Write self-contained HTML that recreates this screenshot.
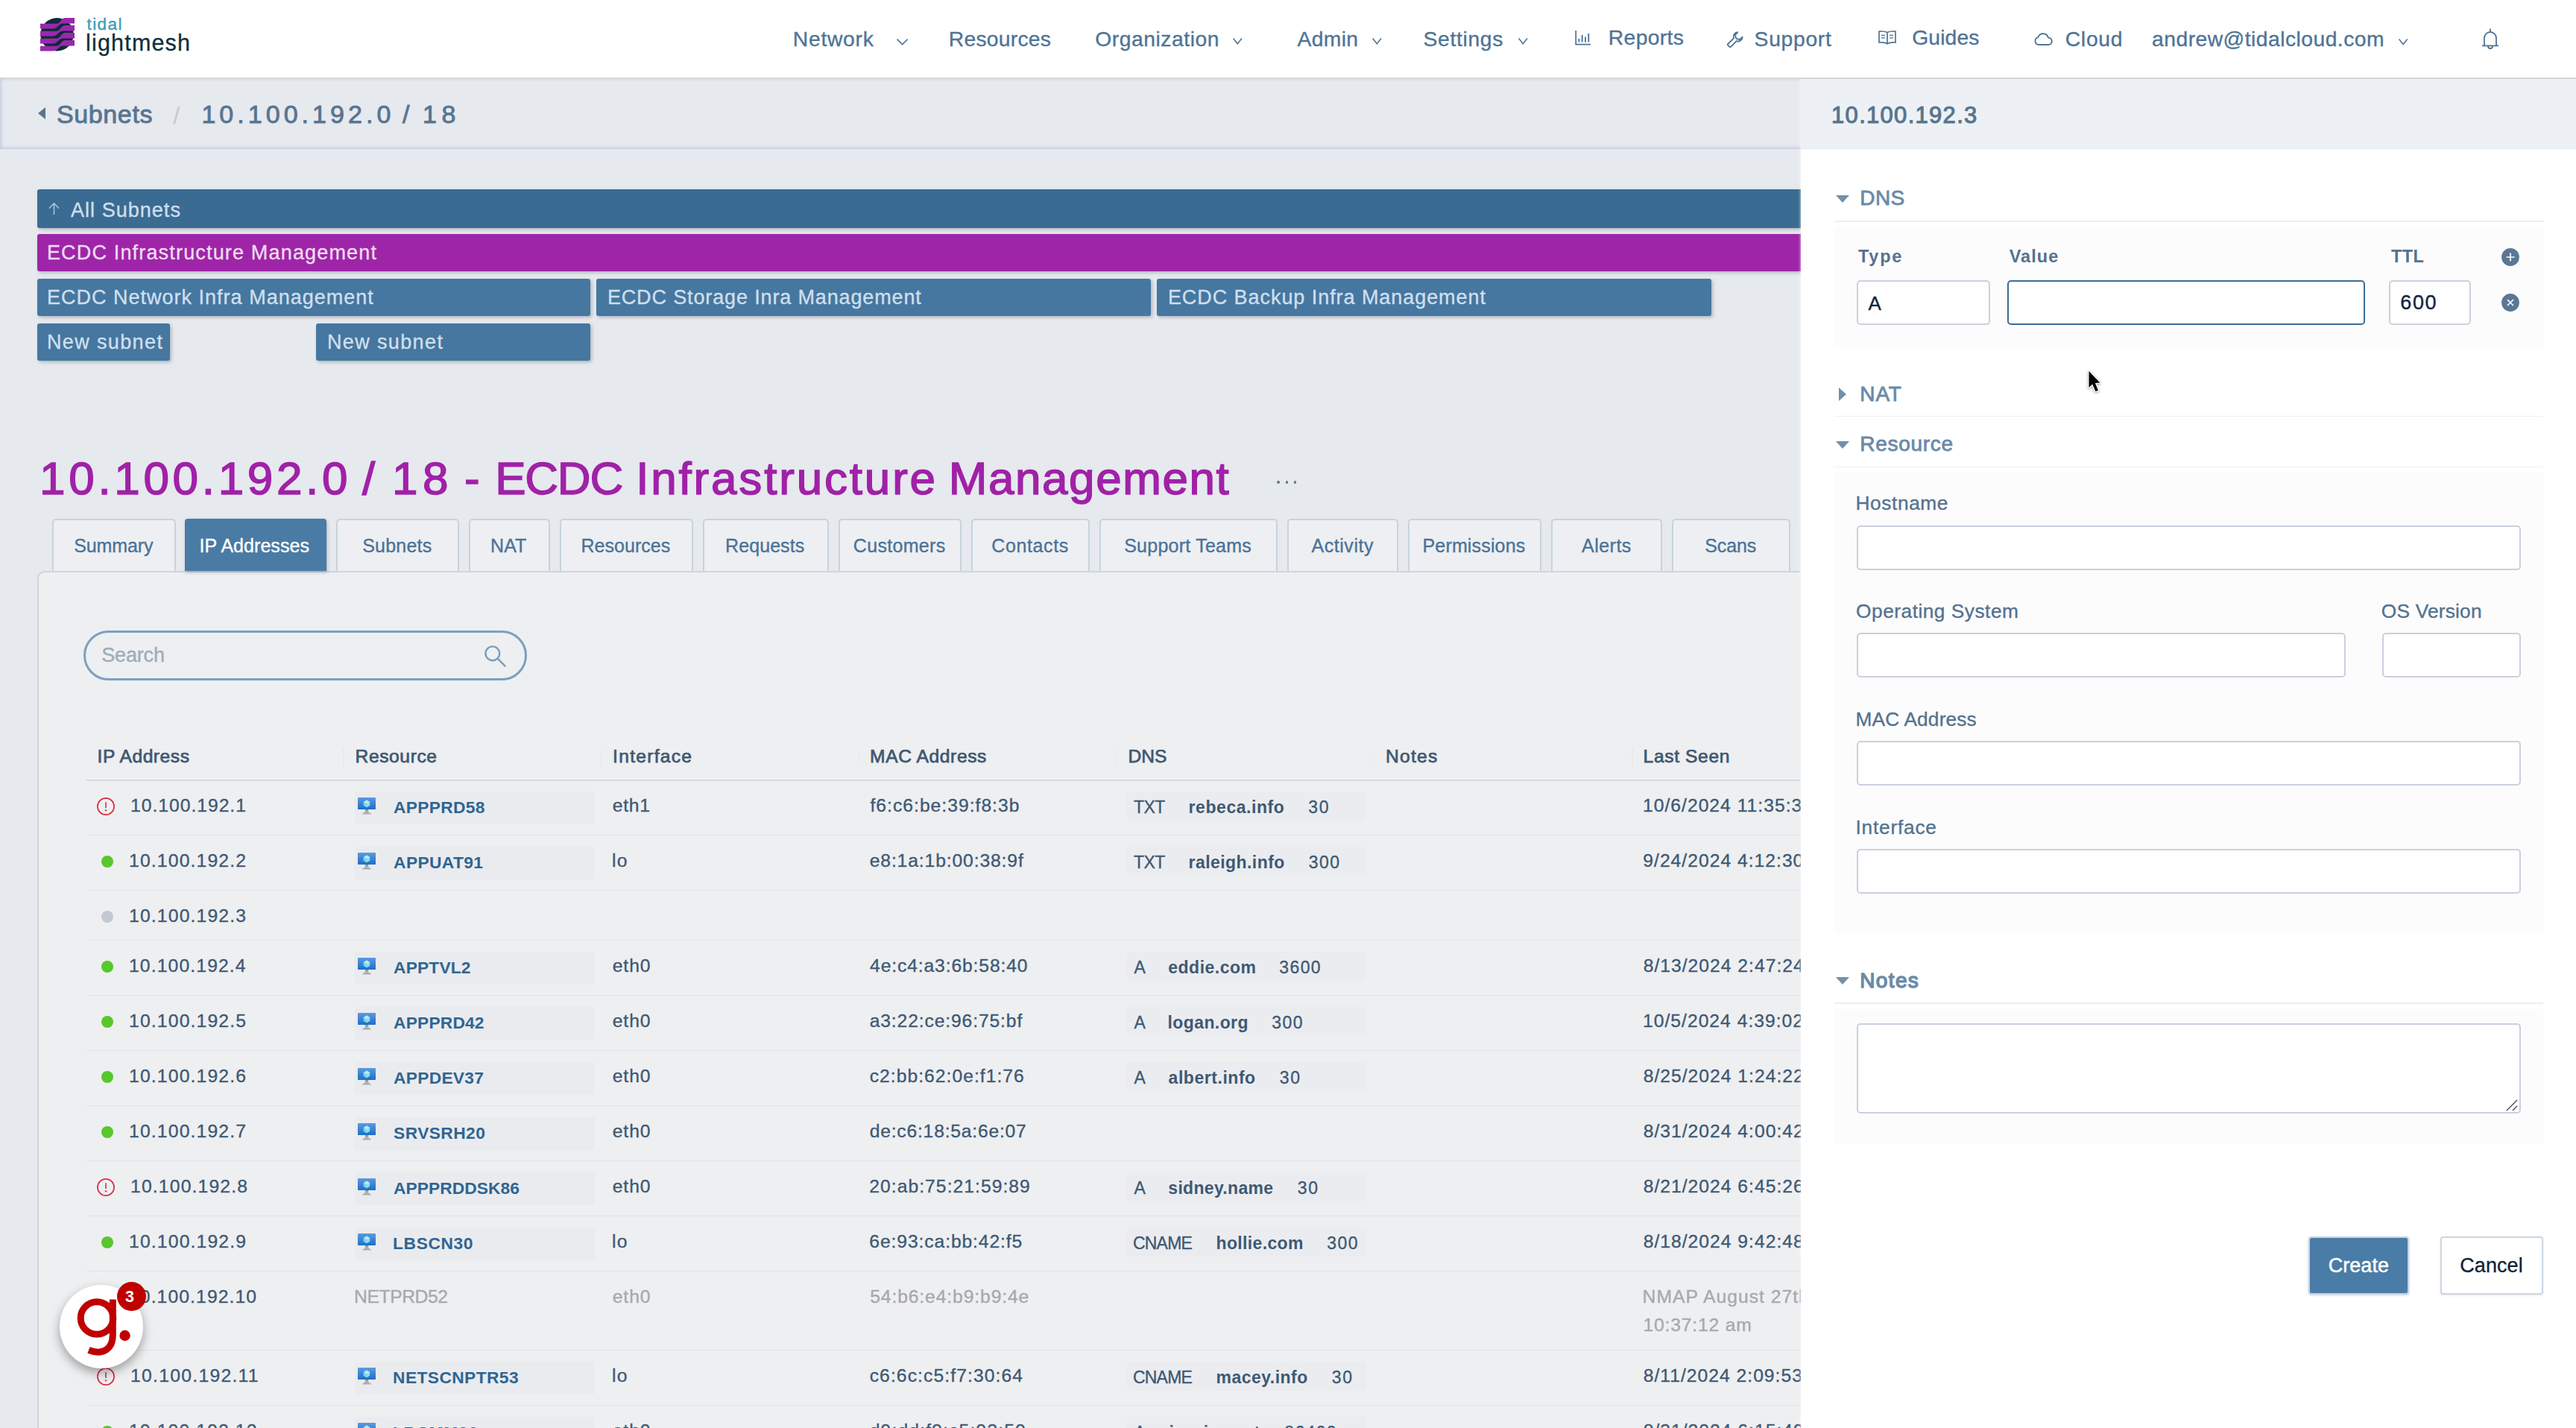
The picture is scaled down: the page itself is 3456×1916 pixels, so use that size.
<!DOCTYPE html>
<html><head><meta charset="utf-8"><title>Lightmesh</title>
<style>
html,body{margin:0;padding:0;}
body{width:3456px;height:1916px;overflow:hidden;position:relative;background:#e6e9ee;font-family:"Liberation Sans",sans-serif;}
.t{position:absolute;white-space:nowrap;line-height:1;}
svg{position:absolute;overflow:visible;}

</style></head><body>
<svg width="0" height="0" style="left:0;top:0"><defs><linearGradient id="vg" x1="0" y1="0" x2="0" y2="1"><stop offset="0" stop-color="#5b9be0"/><stop offset="1" stop-color="#1c6fc8"/></linearGradient>
<linearGradient id="sg" x1="0" y1="0" x2="0" y2="1"><stop offset="0" stop-color="#8c8f94"/><stop offset="1" stop-color="#b9bbc0"/></linearGradient></defs></svg>
<div style="position:absolute;left:50px;top:254px;width:2420px;height:52px;background:#3a6c93;box-shadow:2px 2px 4px rgba(40,50,70,.28);border-radius:3px;"></div>
<div style="position:absolute;left:50px;top:314px;width:2420px;height:50px;background:#9e25a7;box-shadow:2px 2px 4px rgba(40,50,70,.28);border-radius:3px;"></div>
<div style="position:absolute;left:50px;top:374px;width:742px;height:50px;background:#4577a0;box-shadow:2px 2px 4px rgba(40,50,70,.28);border-radius:3px;"></div>
<div style="position:absolute;left:800px;top:374px;width:744px;height:50px;background:#4577a0;box-shadow:2px 2px 4px rgba(40,50,70,.28);border-radius:3px;"></div>
<div style="position:absolute;left:1552px;top:374px;width:744px;height:50px;background:#4577a0;box-shadow:2px 2px 4px rgba(40,50,70,.28);border-radius:3px;"></div>
<div style="position:absolute;left:50px;top:434px;width:178px;height:50px;background:#4577a0;box-shadow:2px 2px 4px rgba(40,50,70,.28);border-radius:3px;"></div>
<div style="position:absolute;left:424px;top:434px;width:368px;height:50px;background:#4577a0;box-shadow:2px 2px 4px rgba(40,50,70,.28);border-radius:3px;"></div>
<svg style="left:65px;top:272px" width="15" height="16" viewBox="0 0 15 16" fill="none" stroke="#a9c2d8" stroke-width="1.6"><path d="M7.5 16 V1 M1 7.5 L7.5 1 L14 7.5"/></svg>
<div style="position:absolute;left:1713.3px;top:645.2px;width:3.6px;height:3.6px;background:#587590;border-radius:2px;"></div>
<div style="position:absolute;left:1724.6px;top:645.2px;width:3.6px;height:3.6px;background:#587590;border-radius:2px;"></div>
<div style="position:absolute;left:1735.8999999999999px;top:645.2px;width:3.6px;height:3.6px;background:#587590;border-radius:2px;"></div>
<div style="position:absolute;left:70px;top:696px;width:161.7px;height:72px;background:#eeeff2;border:2px solid #c6d4de;border-radius:5px 5px 0 0;"></div>
<div style="position:absolute;left:450.5px;top:696px;width:161.7px;height:72px;background:#eeeff2;border:2px solid #c6d4de;border-radius:5px 5px 0 0;"></div>
<div style="position:absolute;left:628.5px;top:696px;width:105.7px;height:72px;background:#eeeff2;border:2px solid #c6d4de;border-radius:5px 5px 0 0;"></div>
<div style="position:absolute;left:750.5px;top:696px;width:175.7px;height:72px;background:#eeeff2;border:2px solid #c6d4de;border-radius:5px 5px 0 0;"></div>
<div style="position:absolute;left:942.5px;top:696px;width:165.7px;height:72px;background:#eeeff2;border:2px solid #c6d4de;border-radius:5px 5px 0 0;"></div>
<div style="position:absolute;left:1124.5px;top:696px;width:161.2px;height:72px;background:#eeeff2;border:2px solid #c6d4de;border-radius:5px 5px 0 0;"></div>
<div style="position:absolute;left:1302.5px;top:696px;width:155.7px;height:72px;background:#eeeff2;border:2px solid #c6d4de;border-radius:5px 5px 0 0;"></div>
<div style="position:absolute;left:1474.5px;top:696px;width:235.7px;height:72px;background:#eeeff2;border:2px solid #c6d4de;border-radius:5px 5px 0 0;"></div>
<div style="position:absolute;left:1726.5px;top:696px;width:145.7px;height:72px;background:#eeeff2;border:2px solid #c6d4de;border-radius:5px 5px 0 0;"></div>
<div style="position:absolute;left:1888.5px;top:696px;width:175.7px;height:72px;background:#eeeff2;border:2px solid #c6d4de;border-radius:5px 5px 0 0;"></div>
<div style="position:absolute;left:2080.5px;top:696px;width:145.7px;height:72px;background:#eeeff2;border:2px solid #c6d4de;border-radius:5px 5px 0 0;"></div>
<div style="position:absolute;left:2242.5px;top:696px;width:155.7px;height:72px;background:#eeeff2;border:2px solid #c6d4de;border-radius:5px 5px 0 0;"></div>
<div style="position:absolute;left:50px;top:765.5px;width:2500px;height:1300px;background:#eeeff1;border:2px solid #cbd6df;border-radius:10px 0 0 0;"></div>
<div style="position:absolute;left:112.3px;top:845.8px;width:588.4px;height:61.2px;border:3.5px solid #7c9fbf;border-radius:36px;"></div>
<svg style="left:650px;top:866px" width="29" height="29" viewBox="0 0 29 29" fill="none" stroke="#7a9ebd" stroke-width="2.4"><circle cx="10.8" cy="10.8" r="9.4"/><path d="M17.6 17.6 L27.6 27.6" stroke-linecap="round"/></svg>
<div style="position:absolute;left:460.0px;top:1005px;width:1.5px;height:23px;background:#e7e9ed;"></div>
<div style="position:absolute;left:805.5px;top:1005px;width:1.5px;height:23px;background:#e7e9ed;"></div>
<div style="position:absolute;left:1151.5px;top:1005px;width:1.5px;height:23px;background:#e7e9ed;"></div>
<div style="position:absolute;left:1496.5px;top:1005px;width:1.5px;height:23px;background:#e7e9ed;"></div>
<div style="position:absolute;left:1842.5px;top:1005px;width:1.5px;height:23px;background:#e7e9ed;"></div>
<div style="position:absolute;left:2189.0px;top:1005px;width:1.5px;height:23px;background:#e7e9ed;"></div>
<div style="position:absolute;left:116px;top:1046px;width:2400px;height:1.5px;background:#d2dbe2;"></div>
<svg style="left:130px;top:1069.5px" width="24" height="24" viewBox="0 0 24 24"><circle cx="12" cy="12" r="11.1" fill="none" stroke="#dc2c43" stroke-width="1.7"/><path d="M12 6.3 V14" stroke="#c4566b" stroke-width="1.9"/><circle cx="12" cy="17.2" r="1.3" fill="#c4566b"/></svg>
<div style="position:absolute;left:476px;top:1062px;width:321.5px;height:44px;background:#eaebee;border-radius:3px;"></div>
<svg style="left:480px;top:1070px" width="24" height="23" viewBox="0 0 24 23">
<rect x="0" y="0" width="24" height="16" rx="0.8" fill="url(#vg)"/>
<path d="M12 3.6 L16.2 6 V10.8 L12 13.2 L7.8 10.8 V6 Z" fill="#8fdcf1"/><path d="M12 3.6 L16.2 6 L12 8.4 L7.8 6 Z" fill="#b5ecf8"/><path d="M12 8.4 V13.2 L7.8 10.8 V6 Z" fill="#7dd3ee"/>
<path d="M10 16 H14 L14.6 20 H9.4 Z" fill="url(#sg)"/><path d="M5.8 22.5 Q7 20 9.4 20 H14.6 Q17 20 18.2 22.5 Z" fill="#a9abb0"/></svg>
<div style="position:absolute;left:1512px;top:1062.3px;width:321px;height:39.2px;background:#ebecf0;border-radius:3px;"></div>
<div style="position:absolute;left:116px;top:1120px;width:2400px;height:1.3px;background:#e0e2e8;"></div>
<div style="position:absolute;left:136px;top:1147.5px;width:16px;height:16px;background:#57c72c;border-radius:50%;"></div>
<div style="position:absolute;left:476px;top:1136px;width:321.5px;height:44px;background:#eaebee;border-radius:3px;"></div>
<svg style="left:480px;top:1144px" width="24" height="23" viewBox="0 0 24 23">
<rect x="0" y="0" width="24" height="16" rx="0.8" fill="url(#vg)"/>
<path d="M12 3.6 L16.2 6 V10.8 L12 13.2 L7.8 10.8 V6 Z" fill="#8fdcf1"/><path d="M12 3.6 L16.2 6 L12 8.4 L7.8 6 Z" fill="#b5ecf8"/><path d="M12 8.4 V13.2 L7.8 10.8 V6 Z" fill="#7dd3ee"/>
<path d="M10 16 H14 L14.6 20 H9.4 Z" fill="url(#sg)"/><path d="M5.8 22.5 Q7 20 9.4 20 H14.6 Q17 20 18.2 22.5 Z" fill="#a9abb0"/></svg>
<div style="position:absolute;left:1512px;top:1136.3px;width:321px;height:39.2px;background:#ebecf0;border-radius:3px;"></div>
<div style="position:absolute;left:116px;top:1194px;width:2400px;height:1.3px;background:#e0e2e8;"></div>
<div style="position:absolute;left:136px;top:1221.5px;width:16px;height:16px;background:#c3c9d1;border-radius:50%;"></div>
<div style="position:absolute;left:116px;top:1261px;width:2400px;height:1.3px;background:#e0e2e8;"></div>
<div style="position:absolute;left:136px;top:1288.5px;width:16px;height:16px;background:#57c72c;border-radius:50%;"></div>
<div style="position:absolute;left:476px;top:1277px;width:321.5px;height:44px;background:#eaebee;border-radius:3px;"></div>
<svg style="left:480px;top:1285px" width="24" height="23" viewBox="0 0 24 23">
<rect x="0" y="0" width="24" height="16" rx="0.8" fill="url(#vg)"/>
<path d="M12 3.6 L16.2 6 V10.8 L12 13.2 L7.8 10.8 V6 Z" fill="#8fdcf1"/><path d="M12 3.6 L16.2 6 L12 8.4 L7.8 6 Z" fill="#b5ecf8"/><path d="M12 8.4 V13.2 L7.8 10.8 V6 Z" fill="#7dd3ee"/>
<path d="M10 16 H14 L14.6 20 H9.4 Z" fill="url(#sg)"/><path d="M5.8 22.5 Q7 20 9.4 20 H14.6 Q17 20 18.2 22.5 Z" fill="#a9abb0"/></svg>
<div style="position:absolute;left:1512px;top:1277.3px;width:321px;height:39.2px;background:#ebecf0;border-radius:3px;"></div>
<div style="position:absolute;left:116px;top:1335px;width:2400px;height:1.3px;background:#e0e2e8;"></div>
<div style="position:absolute;left:136px;top:1362.5px;width:16px;height:16px;background:#57c72c;border-radius:50%;"></div>
<div style="position:absolute;left:476px;top:1351px;width:321.5px;height:44px;background:#eaebee;border-radius:3px;"></div>
<svg style="left:480px;top:1359px" width="24" height="23" viewBox="0 0 24 23">
<rect x="0" y="0" width="24" height="16" rx="0.8" fill="url(#vg)"/>
<path d="M12 3.6 L16.2 6 V10.8 L12 13.2 L7.8 10.8 V6 Z" fill="#8fdcf1"/><path d="M12 3.6 L16.2 6 L12 8.4 L7.8 6 Z" fill="#b5ecf8"/><path d="M12 8.4 V13.2 L7.8 10.8 V6 Z" fill="#7dd3ee"/>
<path d="M10 16 H14 L14.6 20 H9.4 Z" fill="url(#sg)"/><path d="M5.8 22.5 Q7 20 9.4 20 H14.6 Q17 20 18.2 22.5 Z" fill="#a9abb0"/></svg>
<div style="position:absolute;left:1512px;top:1351.3px;width:321px;height:39.2px;background:#ebecf0;border-radius:3px;"></div>
<div style="position:absolute;left:116px;top:1409px;width:2400px;height:1.3px;background:#e0e2e8;"></div>
<div style="position:absolute;left:136px;top:1436.5px;width:16px;height:16px;background:#57c72c;border-radius:50%;"></div>
<div style="position:absolute;left:476px;top:1425px;width:321.5px;height:44px;background:#eaebee;border-radius:3px;"></div>
<svg style="left:480px;top:1433px" width="24" height="23" viewBox="0 0 24 23">
<rect x="0" y="0" width="24" height="16" rx="0.8" fill="url(#vg)"/>
<path d="M12 3.6 L16.2 6 V10.8 L12 13.2 L7.8 10.8 V6 Z" fill="#8fdcf1"/><path d="M12 3.6 L16.2 6 L12 8.4 L7.8 6 Z" fill="#b5ecf8"/><path d="M12 8.4 V13.2 L7.8 10.8 V6 Z" fill="#7dd3ee"/>
<path d="M10 16 H14 L14.6 20 H9.4 Z" fill="url(#sg)"/><path d="M5.8 22.5 Q7 20 9.4 20 H14.6 Q17 20 18.2 22.5 Z" fill="#a9abb0"/></svg>
<div style="position:absolute;left:1512px;top:1425.3px;width:321px;height:39.2px;background:#ebecf0;border-radius:3px;"></div>
<div style="position:absolute;left:116px;top:1483px;width:2400px;height:1.3px;background:#e0e2e8;"></div>
<div style="position:absolute;left:136px;top:1510.5px;width:16px;height:16px;background:#57c72c;border-radius:50%;"></div>
<div style="position:absolute;left:476px;top:1499px;width:321.5px;height:44px;background:#eaebee;border-radius:3px;"></div>
<svg style="left:480px;top:1507px" width="24" height="23" viewBox="0 0 24 23">
<rect x="0" y="0" width="24" height="16" rx="0.8" fill="url(#vg)"/>
<path d="M12 3.6 L16.2 6 V10.8 L12 13.2 L7.8 10.8 V6 Z" fill="#8fdcf1"/><path d="M12 3.6 L16.2 6 L12 8.4 L7.8 6 Z" fill="#b5ecf8"/><path d="M12 8.4 V13.2 L7.8 10.8 V6 Z" fill="#7dd3ee"/>
<path d="M10 16 H14 L14.6 20 H9.4 Z" fill="url(#sg)"/><path d="M5.8 22.5 Q7 20 9.4 20 H14.6 Q17 20 18.2 22.5 Z" fill="#a9abb0"/></svg>
<div style="position:absolute;left:116px;top:1557px;width:2400px;height:1.3px;background:#e0e2e8;"></div>
<svg style="left:130px;top:1580.5px" width="24" height="24" viewBox="0 0 24 24"><circle cx="12" cy="12" r="11.1" fill="none" stroke="#dc2c43" stroke-width="1.7"/><path d="M12 6.3 V14" stroke="#c4566b" stroke-width="1.9"/><circle cx="12" cy="17.2" r="1.3" fill="#c4566b"/></svg>
<div style="position:absolute;left:476px;top:1573px;width:321.5px;height:44px;background:#eaebee;border-radius:3px;"></div>
<svg style="left:480px;top:1581px" width="24" height="23" viewBox="0 0 24 23">
<rect x="0" y="0" width="24" height="16" rx="0.8" fill="url(#vg)"/>
<path d="M12 3.6 L16.2 6 V10.8 L12 13.2 L7.8 10.8 V6 Z" fill="#8fdcf1"/><path d="M12 3.6 L16.2 6 L12 8.4 L7.8 6 Z" fill="#b5ecf8"/><path d="M12 8.4 V13.2 L7.8 10.8 V6 Z" fill="#7dd3ee"/>
<path d="M10 16 H14 L14.6 20 H9.4 Z" fill="url(#sg)"/><path d="M5.8 22.5 Q7 20 9.4 20 H14.6 Q17 20 18.2 22.5 Z" fill="#a9abb0"/></svg>
<div style="position:absolute;left:1512px;top:1573.3px;width:321px;height:39.2px;background:#ebecf0;border-radius:3px;"></div>
<div style="position:absolute;left:116px;top:1631px;width:2400px;height:1.3px;background:#e0e2e8;"></div>
<div style="position:absolute;left:136px;top:1658.5px;width:16px;height:16px;background:#57c72c;border-radius:50%;"></div>
<div style="position:absolute;left:476px;top:1647px;width:321.5px;height:44px;background:#eaebee;border-radius:3px;"></div>
<svg style="left:480px;top:1655px" width="24" height="23" viewBox="0 0 24 23">
<rect x="0" y="0" width="24" height="16" rx="0.8" fill="url(#vg)"/>
<path d="M12 3.6 L16.2 6 V10.8 L12 13.2 L7.8 10.8 V6 Z" fill="#8fdcf1"/><path d="M12 3.6 L16.2 6 L12 8.4 L7.8 6 Z" fill="#b5ecf8"/><path d="M12 8.4 V13.2 L7.8 10.8 V6 Z" fill="#7dd3ee"/>
<path d="M10 16 H14 L14.6 20 H9.4 Z" fill="url(#sg)"/><path d="M5.8 22.5 Q7 20 9.4 20 H14.6 Q17 20 18.2 22.5 Z" fill="#a9abb0"/></svg>
<div style="position:absolute;left:1512px;top:1647.3px;width:321px;height:39.2px;background:#ebecf0;border-radius:3px;"></div>
<div style="position:absolute;left:116px;top:1705px;width:2400px;height:1.3px;background:#e0e2e8;"></div>
<div style="position:absolute;left:136px;top:1732.5px;width:16px;height:16px;background:#57c72c;border-radius:50%;"></div>
<div style="position:absolute;left:116px;top:1811px;width:2400px;height:1.3px;background:#e0e2e8;"></div>
<svg style="left:130px;top:1834.5px" width="24" height="24" viewBox="0 0 24 24"><circle cx="12" cy="12" r="11.1" fill="none" stroke="#dc2c43" stroke-width="1.7"/><path d="M12 6.3 V14" stroke="#c4566b" stroke-width="1.9"/><circle cx="12" cy="17.2" r="1.3" fill="#c4566b"/></svg>
<div style="position:absolute;left:476px;top:1827px;width:321.5px;height:44px;background:#eaebee;border-radius:3px;"></div>
<svg style="left:480px;top:1835px" width="24" height="23" viewBox="0 0 24 23">
<rect x="0" y="0" width="24" height="16" rx="0.8" fill="url(#vg)"/>
<path d="M12 3.6 L16.2 6 V10.8 L12 13.2 L7.8 10.8 V6 Z" fill="#8fdcf1"/><path d="M12 3.6 L16.2 6 L12 8.4 L7.8 6 Z" fill="#b5ecf8"/><path d="M12 8.4 V13.2 L7.8 10.8 V6 Z" fill="#7dd3ee"/>
<path d="M10 16 H14 L14.6 20 H9.4 Z" fill="url(#sg)"/><path d="M5.8 22.5 Q7 20 9.4 20 H14.6 Q17 20 18.2 22.5 Z" fill="#a9abb0"/></svg>
<div style="position:absolute;left:1512px;top:1827.3px;width:321px;height:39.2px;background:#ebecf0;border-radius:3px;"></div>
<div style="position:absolute;left:116px;top:1885px;width:2400px;height:1.3px;background:#e0e2e8;"></div>
<div style="position:absolute;left:136px;top:1912.5px;width:16px;height:16px;background:#57c72c;border-radius:50%;"></div>
<div style="position:absolute;left:476px;top:1901px;width:321.5px;height:44px;background:#eaebee;border-radius:3px;"></div>
<svg style="left:480px;top:1909px" width="24" height="23" viewBox="0 0 24 23">
<rect x="0" y="0" width="24" height="16" rx="0.8" fill="url(#vg)"/>
<path d="M12 3.6 L16.2 6 V10.8 L12 13.2 L7.8 10.8 V6 Z" fill="#8fdcf1"/><path d="M12 3.6 L16.2 6 L12 8.4 L7.8 6 Z" fill="#b5ecf8"/><path d="M12 8.4 V13.2 L7.8 10.8 V6 Z" fill="#7dd3ee"/>
<path d="M10 16 H14 L14.6 20 H9.4 Z" fill="url(#sg)"/><path d="M5.8 22.5 Q7 20 9.4 20 H14.6 Q17 20 18.2 22.5 Z" fill="#a9abb0"/></svg>
<div style="position:absolute;left:1512px;top:1901.3px;width:321px;height:39.2px;background:#ebecf0;border-radius:3px;"></div>
<div class="t" style="left:95.0px;top:269.1px;font-size:27px;color:#cfdfee;letter-spacing:1.03px;-webkit-text-stroke:0.35px #cfdfee;">All Subnets</div>
<div class="t" style="left:62.9px;top:325.6px;font-size:27px;color:#f0dcf2;letter-spacing:1.17px;-webkit-text-stroke:0.35px #f0dcf2;">ECDC Infrastructure Management</div>
<div class="t" style="left:62.9px;top:385.6px;font-size:27px;color:#cfdfee;letter-spacing:1.01px;-webkit-text-stroke:0.35px #cfdfee;">ECDC Network Infra Management</div>
<div class="t" style="left:814.9px;top:385.6px;font-size:27px;color:#cfdfee;letter-spacing:0.86px;-webkit-text-stroke:0.35px #cfdfee;">ECDC Storage Inra Management</div>
<div class="t" style="left:1566.9px;top:385.6px;font-size:27px;color:#cfdfee;letter-spacing:0.94px;-webkit-text-stroke:0.35px #cfdfee;">ECDC Backup Infra Management</div>
<div class="t" style="left:62.9px;top:445.6px;font-size:27px;color:#cfdfee;letter-spacing:1.38px;-webkit-text-stroke:0.35px #cfdfee;">New subnet</div>
<div class="t" style="left:438.9px;top:445.6px;font-size:27px;color:#cfdfee;letter-spacing:1.38px;-webkit-text-stroke:0.35px #cfdfee;">New subnet</div>
<div class="t" style="left:53.1px;top:610.8px;font-size:62px;color:#a021a8;letter-spacing:4.67px;-webkit-text-stroke:1.5px #a021a8;">10.100.192.0</div>
<div class="t" style="left:486.0px;top:610.8px;font-size:62px;color:#a021a8;-webkit-text-stroke:1.5px #a021a8;">/</div>
<div class="t" style="left:526.1px;top:610.8px;font-size:62px;color:#a021a8;letter-spacing:6.42px;-webkit-text-stroke:1.5px #a021a8;">18</div>
<div class="t" style="left:623.1px;top:610.8px;font-size:62px;color:#a021a8;-webkit-text-stroke:1.5px #a021a8;">-</div>
<div class="t" style="left:664.2px;top:610.8px;font-size:62px;color:#a021a8;letter-spacing:-1.23px;-webkit-text-stroke:1.5px #a021a8;">ECDC</div>
<div class="t" style="left:853.2px;top:610.8px;font-size:62px;color:#a021a8;letter-spacing:2.82px;-webkit-text-stroke:1.5px #a021a8;">Infrastructure</div>
<div class="t" style="left:1272.7px;top:610.8px;font-size:62px;color:#a021a8;letter-spacing:1.58px;-webkit-text-stroke:1.5px #a021a8;">Management</div>
<div class="t" style="left:99.2px;top:719.9px;font-size:25px;color:#4a7398;letter-spacing:-0.11px;-webkit-text-stroke:0.35px #4a7398;">Summary</div>
<div class="t" style="left:486.2px;top:719.9px;font-size:25px;color:#4a7398;letter-spacing:0.22px;-webkit-text-stroke:0.35px #4a7398;">Subnets</div>
<div class="t" style="left:658.0px;top:719.9px;font-size:25px;color:#4a7398;letter-spacing:0.12px;-webkit-text-stroke:0.35px #4a7398;">NAT</div>
<div class="t" style="left:779.5px;top:719.9px;font-size:25px;color:#4a7398;letter-spacing:0.03px;-webkit-text-stroke:0.35px #4a7398;">Resources</div>
<div class="t" style="left:973.0px;top:719.9px;font-size:25px;color:#4a7398;letter-spacing:0.09px;-webkit-text-stroke:0.35px #4a7398;">Requests</div>
<div class="t" style="left:1144.8px;top:719.9px;font-size:25px;color:#4a7398;letter-spacing:0.32px;-webkit-text-stroke:0.35px #4a7398;">Customers</div>
<div class="t" style="left:1330.3px;top:719.9px;font-size:25px;color:#4a7398;letter-spacing:0.61px;-webkit-text-stroke:0.35px #4a7398;">Contacts</div>
<div class="t" style="left:1508.2px;top:719.9px;font-size:25px;color:#4a7398;letter-spacing:0.24px;-webkit-text-stroke:0.35px #4a7398;">Support Teams</div>
<div class="t" style="left:1759.5px;top:719.9px;font-size:25px;color:#4a7398;letter-spacing:0.55px;-webkit-text-stroke:0.35px #4a7398;">Activity</div>
<div class="t" style="left:1908.5px;top:719.9px;font-size:25px;color:#4a7398;letter-spacing:0.16px;-webkit-text-stroke:0.35px #4a7398;">Permissions</div>
<div class="t" style="left:2122.0px;top:719.9px;font-size:25px;color:#4a7398;letter-spacing:0.48px;-webkit-text-stroke:0.35px #4a7398;">Alerts</div>
<div class="t" style="left:2287.2px;top:719.9px;font-size:25px;color:#4a7398;letter-spacing:-0.10px;-webkit-text-stroke:0.35px #4a7398;">Scans</div>
<div class="t" style="left:136.2px;top:866.3px;font-size:27px;color:#9cadbb;letter-spacing:-0.16px;-webkit-text-stroke:0.35px #9cadbb;">Search</div>
<div class="t" style="left:130.6px;top:1002.8px;font-size:24.6px;color:#3f5871;letter-spacing:0.54px;-webkit-text-stroke:0.75px #3f5871;">IP Address</div>
<div class="t" style="left:476.6px;top:1002.8px;font-size:24.6px;color:#3f5871;letter-spacing:0.59px;-webkit-text-stroke:0.75px #3f5871;">Resource</div>
<div class="t" style="left:822.1px;top:1002.8px;font-size:24.6px;color:#3f5871;letter-spacing:1.27px;-webkit-text-stroke:0.75px #3f5871;">Interface</div>
<div class="t" style="left:1167.1px;top:1002.8px;font-size:24.6px;color:#3f5871;letter-spacing:0.59px;-webkit-text-stroke:0.75px #3f5871;">MAC Address</div>
<div class="t" style="left:1513.6px;top:1002.8px;font-size:24.6px;color:#3f5871;-webkit-text-stroke:0.75px #3f5871;">DNS</div>
<div class="t" style="left:1859.1px;top:1002.8px;font-size:24.6px;color:#3f5871;letter-spacing:1.23px;-webkit-text-stroke:0.75px #3f5871;">Notes</div>
<div class="t" style="left:2204.6px;top:1002.8px;font-size:24.6px;color:#3f5871;letter-spacing:0.63px;-webkit-text-stroke:0.75px #3f5871;">Last Seen</div>
<div class="t" style="left:175.0px;top:1068.5px;font-size:24.7px;color:#3e5973;letter-spacing:0.98px;-webkit-text-stroke:0.35px #3e5973;">10.100.192.1</div>
<div class="t" style="left:528.1px;top:1071.9px;font-size:22.8px;color:#2f6592;letter-spacing:0.29px;font-weight:bold;">APPPRD58</div>
<div class="t" style="left:821.7px;top:1068.5px;font-size:24.7px;color:#3e5973;letter-spacing:0.73px;-webkit-text-stroke:0.35px #3e5973;">eth1</div>
<div class="t" style="left:1167.5px;top:1068.5px;font-size:24.7px;color:#3e5973;letter-spacing:1.00px;-webkit-text-stroke:0.35px #3e5973;">f6:c6:be:39:f8:3b</div>
<div class="t" style="left:1521.1px;top:1071.5px;font-size:23px;color:#3e5973;letter-spacing:-0.59px;-webkit-text-stroke:0.35px #3e5973;">TXT</div>
<div class="t" style="left:1594.6px;top:1071.5px;font-size:23px;color:#3e5973;letter-spacing:0.55px;font-weight:bold;">rebeca.info</div>
<div class="t" style="left:1755.3px;top:1071.5px;font-size:23px;color:#3e5973;letter-spacing:1.71px;-webkit-text-stroke:0.35px #3e5973;">30</div>
<div class="t" style="left:2204.0px;top:1068.5px;font-size:24.7px;color:#3e5973;-webkit-text-stroke:0.35px #3e5973;letter-spacing:1.0px;">10/6/2024 11:35:34</div>
<div class="t" style="left:173.0px;top:1142.5px;font-size:24.7px;color:#3e5973;letter-spacing:1.17px;-webkit-text-stroke:0.35px #3e5973;">10.100.192.2</div>
<div class="t" style="left:528.1px;top:1145.9px;font-size:22.8px;color:#2f6592;letter-spacing:0.36px;font-weight:bold;">APPUAT91</div>
<div class="t" style="left:821.0px;top:1142.5px;font-size:24.7px;color:#3e5973;letter-spacing:1.32px;-webkit-text-stroke:0.35px #3e5973;">lo</div>
<div class="t" style="left:1166.7px;top:1142.5px;font-size:24.7px;color:#3e5973;letter-spacing:0.87px;-webkit-text-stroke:0.35px #3e5973;">e8:1a:1b:00:38:9f</div>
<div class="t" style="left:1521.1px;top:1145.5px;font-size:23px;color:#3e5973;letter-spacing:-0.59px;-webkit-text-stroke:0.35px #3e5973;">TXT</div>
<div class="t" style="left:1594.6px;top:1145.5px;font-size:23px;color:#3e5973;letter-spacing:0.43px;font-weight:bold;">raleigh.info</div>
<div class="t" style="left:1755.8px;top:1145.5px;font-size:23px;color:#3e5973;letter-spacing:1.46px;-webkit-text-stroke:0.35px #3e5973;">300</div>
<div class="t" style="left:2204.3px;top:1142.5px;font-size:24.7px;color:#3e5973;-webkit-text-stroke:0.35px #3e5973;letter-spacing:1.0px;">9/24/2024 4:12:30</div>
<div class="t" style="left:173.0px;top:1216.5px;font-size:24.7px;color:#3e5973;letter-spacing:1.17px;-webkit-text-stroke:0.35px #3e5973;">10.100.192.3</div>
<div class="t" style="left:173.0px;top:1283.5px;font-size:24.7px;color:#3e5973;letter-spacing:1.13px;-webkit-text-stroke:0.35px #3e5973;">10.100.192.4</div>
<div class="t" style="left:528.1px;top:1286.9px;font-size:22.8px;color:#2f6592;letter-spacing:0.13px;font-weight:bold;">APPTVL2</div>
<div class="t" style="left:821.7px;top:1283.5px;font-size:24.7px;color:#3e5973;letter-spacing:0.94px;-webkit-text-stroke:0.35px #3e5973;">eth0</div>
<div class="t" style="left:1167.1px;top:1283.5px;font-size:24.7px;color:#3e5973;letter-spacing:0.86px;-webkit-text-stroke:0.35px #3e5973;">4e:c4:a3:6b:58:40</div>
<div class="t" style="left:1521.5px;top:1286.5px;font-size:23px;color:#3e5973;-webkit-text-stroke:0.35px #3e5973;">A</div>
<div class="t" style="left:1567.3px;top:1286.5px;font-size:23px;color:#3e5973;letter-spacing:0.48px;font-weight:bold;">eddie.com</div>
<div class="t" style="left:1716.3px;top:1286.5px;font-size:23px;color:#3e5973;letter-spacing:1.38px;-webkit-text-stroke:0.35px #3e5973;">3600</div>
<div class="t" style="left:2204.7px;top:1283.5px;font-size:24.7px;color:#3e5973;-webkit-text-stroke:0.35px #3e5973;letter-spacing:1.0px;">8/13/2024 2:47:24</div>
<div class="t" style="left:173.0px;top:1357.5px;font-size:24.7px;color:#3e5973;letter-spacing:1.17px;-webkit-text-stroke:0.35px #3e5973;">10.100.192.5</div>
<div class="t" style="left:528.1px;top:1360.9px;font-size:22.8px;color:#2f6592;letter-spacing:0.15px;font-weight:bold;">APPPRD42</div>
<div class="t" style="left:821.7px;top:1357.5px;font-size:24.7px;color:#3e5973;letter-spacing:0.94px;-webkit-text-stroke:0.35px #3e5973;">eth0</div>
<div class="t" style="left:1166.7px;top:1357.5px;font-size:24.7px;color:#3e5973;letter-spacing:0.86px;-webkit-text-stroke:0.35px #3e5973;">a3:22:ce:96:75:bf</div>
<div class="t" style="left:1521.5px;top:1360.5px;font-size:23px;color:#3e5973;-webkit-text-stroke:0.35px #3e5973;">A</div>
<div class="t" style="left:1566.6px;top:1360.5px;font-size:23px;color:#3e5973;letter-spacing:0.39px;font-weight:bold;">logan.org</div>
<div class="t" style="left:1706.3px;top:1360.5px;font-size:23px;color:#3e5973;letter-spacing:1.46px;-webkit-text-stroke:0.35px #3e5973;">300</div>
<div class="t" style="left:2204.0px;top:1357.5px;font-size:24.7px;color:#3e5973;-webkit-text-stroke:0.35px #3e5973;letter-spacing:1.0px;">10/5/2024 4:39:02</div>
<div class="t" style="left:173.0px;top:1431.5px;font-size:24.7px;color:#3e5973;letter-spacing:1.17px;-webkit-text-stroke:0.35px #3e5973;">10.100.192.6</div>
<div class="t" style="left:528.1px;top:1434.9px;font-size:22.8px;color:#2f6592;letter-spacing:0.24px;font-weight:bold;">APPDEV37</div>
<div class="t" style="left:821.7px;top:1431.5px;font-size:24.7px;color:#3e5973;letter-spacing:0.94px;-webkit-text-stroke:0.35px #3e5973;">eth0</div>
<div class="t" style="left:1166.7px;top:1431.5px;font-size:24.7px;color:#3e5973;letter-spacing:1.02px;-webkit-text-stroke:0.35px #3e5973;">c2:bb:62:0e:f1:76</div>
<div class="t" style="left:1521.5px;top:1434.5px;font-size:23px;color:#3e5973;-webkit-text-stroke:0.35px #3e5973;">A</div>
<div class="t" style="left:1567.6px;top:1434.5px;font-size:23px;color:#3e5973;letter-spacing:0.54px;font-weight:bold;">albert.info</div>
<div class="t" style="left:1716.8px;top:1434.5px;font-size:23px;color:#3e5973;letter-spacing:1.71px;-webkit-text-stroke:0.35px #3e5973;">30</div>
<div class="t" style="left:2204.7px;top:1431.5px;font-size:24.7px;color:#3e5973;-webkit-text-stroke:0.35px #3e5973;letter-spacing:1.0px;">8/25/2024 1:24:22</div>
<div class="t" style="left:173.0px;top:1505.5px;font-size:24.7px;color:#3e5973;letter-spacing:1.17px;-webkit-text-stroke:0.35px #3e5973;">10.100.192.7</div>
<div class="t" style="left:528.1px;top:1508.9px;font-size:22.8px;color:#2f6592;letter-spacing:0.40px;font-weight:bold;">SRVSRH20</div>
<div class="t" style="left:821.7px;top:1505.5px;font-size:24.7px;color:#3e5973;letter-spacing:0.94px;-webkit-text-stroke:0.35px #3e5973;">eth0</div>
<div class="t" style="left:1166.7px;top:1505.5px;font-size:24.7px;color:#3e5973;letter-spacing:0.78px;-webkit-text-stroke:0.35px #3e5973;">de:c6:18:5a:6e:07</div>
<div class="t" style="left:2204.7px;top:1505.5px;font-size:24.7px;color:#3e5973;-webkit-text-stroke:0.35px #3e5973;letter-spacing:1.0px;">8/31/2024 4:00:42</div>
<div class="t" style="left:175.0px;top:1579.5px;font-size:24.7px;color:#3e5973;letter-spacing:1.17px;-webkit-text-stroke:0.35px #3e5973;">10.100.192.8</div>
<div class="t" style="left:528.1px;top:1582.9px;font-size:22.8px;color:#2f6592;letter-spacing:0.04px;font-weight:bold;">APPPRDDSK86</div>
<div class="t" style="left:821.7px;top:1579.5px;font-size:24.7px;color:#3e5973;letter-spacing:0.94px;-webkit-text-stroke:0.35px #3e5973;">eth0</div>
<div class="t" style="left:1166.3px;top:1579.5px;font-size:24.7px;color:#3e5973;letter-spacing:1.03px;-webkit-text-stroke:0.35px #3e5973;">20:ab:75:21:59:89</div>
<div class="t" style="left:1521.5px;top:1582.5px;font-size:23px;color:#3e5973;-webkit-text-stroke:0.35px #3e5973;">A</div>
<div class="t" style="left:1567.3px;top:1582.5px;font-size:23px;color:#3e5973;letter-spacing:0.32px;font-weight:bold;">sidney.name</div>
<div class="t" style="left:1740.8px;top:1582.5px;font-size:23px;color:#3e5973;letter-spacing:1.71px;-webkit-text-stroke:0.35px #3e5973;">30</div>
<div class="t" style="left:2204.7px;top:1579.5px;font-size:24.7px;color:#3e5973;-webkit-text-stroke:0.35px #3e5973;letter-spacing:1.0px;">8/21/2024 6:45:26</div>
<div class="t" style="left:173.0px;top:1653.5px;font-size:24.7px;color:#3e5973;letter-spacing:1.17px;-webkit-text-stroke:0.35px #3e5973;">10.100.192.9</div>
<div class="t" style="left:527.1px;top:1656.9px;font-size:22.8px;color:#2f6592;letter-spacing:0.58px;font-weight:bold;">LBSCN30</div>
<div class="t" style="left:821.0px;top:1653.5px;font-size:24.7px;color:#3e5973;letter-spacing:1.32px;-webkit-text-stroke:0.35px #3e5973;">lo</div>
<div class="t" style="left:1166.3px;top:1653.5px;font-size:24.7px;color:#3e5973;letter-spacing:0.89px;-webkit-text-stroke:0.35px #3e5973;">6e:93:ca:bb:42:f5</div>
<div class="t" style="left:1519.9px;top:1656.5px;font-size:23px;color:#3e5973;letter-spacing:-0.75px;-webkit-text-stroke:0.35px #3e5973;">CNAME</div>
<div class="t" style="left:1631.6px;top:1656.5px;font-size:23px;color:#3e5973;letter-spacing:0.34px;font-weight:bold;">hollie.com</div>
<div class="t" style="left:1780.3px;top:1656.5px;font-size:23px;color:#3e5973;letter-spacing:1.46px;-webkit-text-stroke:0.35px #3e5973;">300</div>
<div class="t" style="left:2204.7px;top:1653.5px;font-size:24.7px;color:#3e5973;-webkit-text-stroke:0.35px #3e5973;letter-spacing:1.0px;">8/18/2024 9:42:48</div>
<div class="t" style="left:173.0px;top:1727.5px;font-size:24.7px;color:#3e5973;letter-spacing:1.10px;-webkit-text-stroke:0.35px #3e5973;">10.100.192.10</div>
<div class="t" style="left:475.1px;top:1727.5px;font-size:24.7px;color:#a6a8af;letter-spacing:-0.44px;-webkit-text-stroke:0.35px #a6a8af;">NETPRD52</div>
<div class="t" style="left:821.7px;top:1727.5px;font-size:24.7px;color:#a6a8af;letter-spacing:0.94px;-webkit-text-stroke:0.35px #a6a8af;">eth0</div>
<div class="t" style="left:1167.2px;top:1727.5px;font-size:24.7px;color:#a6a8af;letter-spacing:0.88px;-webkit-text-stroke:0.35px #a6a8af;">54:b6:e4:b9:b9:4e</div>
<div class="t" style="left:2203.6px;top:1727.5px;font-size:24.7px;color:#a6a8af;-webkit-text-stroke:0.35px #a6a8af;letter-spacing:1.0px;">NMAP August 27th 2024,</div>
<div class="t" style="left:2204.5px;top:1765.5px;font-size:24.7px;color:#a6a8af;letter-spacing:0.80px;-webkit-text-stroke:0.35px #a6a8af;">10:37:12 am</div>
<div class="t" style="left:175.0px;top:1833.5px;font-size:24.7px;color:#3e5973;letter-spacing:1.29px;-webkit-text-stroke:0.35px #3e5973;">10.100.192.11</div>
<div class="t" style="left:527.1px;top:1836.9px;font-size:22.8px;color:#2f6592;letter-spacing:0.38px;font-weight:bold;">NETSCNPTR53</div>
<div class="t" style="left:821.0px;top:1833.5px;font-size:24.7px;color:#3e5973;letter-spacing:1.32px;-webkit-text-stroke:0.35px #3e5973;">lo</div>
<div class="t" style="left:1166.7px;top:1833.5px;font-size:24.7px;color:#3e5973;letter-spacing:1.08px;-webkit-text-stroke:0.35px #3e5973;">c6:6c:c5:f7:30:64</div>
<div class="t" style="left:1519.9px;top:1836.5px;font-size:23px;color:#3e5973;letter-spacing:-0.75px;-webkit-text-stroke:0.35px #3e5973;">CNAME</div>
<div class="t" style="left:1631.6px;top:1836.5px;font-size:23px;color:#3e5973;letter-spacing:0.47px;font-weight:bold;">macey.info</div>
<div class="t" style="left:1786.8px;top:1836.5px;font-size:23px;color:#3e5973;letter-spacing:1.71px;-webkit-text-stroke:0.35px #3e5973;">30</div>
<div class="t" style="left:2204.7px;top:1833.5px;font-size:24.7px;color:#3e5973;-webkit-text-stroke:0.35px #3e5973;letter-spacing:1.0px;">8/11/2024 2:09:53</div>
<div class="t" style="left:173.0px;top:1907.5px;font-size:24.7px;color:#3e5973;letter-spacing:1.13px;-webkit-text-stroke:0.35px #3e5973;">10.100.192.12</div>
<div class="t" style="left:527.1px;top:1910.9px;font-size:22.8px;color:#2f6592;letter-spacing:0.55px;font-weight:bold;">LBCMM26</div>
<div class="t" style="left:821.7px;top:1907.5px;font-size:24.7px;color:#3e5973;letter-spacing:0.94px;-webkit-text-stroke:0.35px #3e5973;">eth0</div>
<div class="t" style="left:1166.7px;top:1907.5px;font-size:24.7px;color:#3e5973;letter-spacing:1.15px;-webkit-text-stroke:0.35px #3e5973;">d9:dd:f9:c5:93:59</div>
<div class="t" style="left:1521.5px;top:1910.5px;font-size:23px;color:#3e5973;-webkit-text-stroke:0.35px #3e5973;">A</div>
<div class="t" style="left:1568.4px;top:1910.5px;font-size:23px;color:#3e5973;letter-spacing:0.41px;font-weight:bold;">jessica.net</div>
<div class="t" style="left:1723.3px;top:1910.5px;font-size:23px;color:#3e5973;letter-spacing:1.33px;-webkit-text-stroke:0.35px #3e5973;">86400</div>
<div class="t" style="left:2204.7px;top:1907.5px;font-size:24.7px;color:#3e5973;-webkit-text-stroke:0.35px #3e5973;letter-spacing:1.0px;">8/31/2024 6:15:49</div>
<div style="position:absolute;left:248px;top:696px;width:190px;height:70px;background:#497ba5;border-radius:4px 4px 0 0;box-shadow:1px 2px 4px rgba(40,50,70,.3);"></div>
<div class="t" style="left:267.5px;top:719.9px;font-size:25px;color:#fff;letter-spacing:0.05px;-webkit-text-stroke:0.35px #fff;">IP Addresses</div>
<div style="position:absolute;left:0px;top:104px;width:3476px;height:95.5px;background:#e6e9ee;box-shadow:inset 0 0 5px 1px #b7c5d3;"></div>
<svg style="left:51px;top:144px" width="10" height="16" viewBox="0 0 10 16"><path d="M10 0 V16 L0 8 Z" fill="#587590"/></svg>
<div class="t" style="left:75.9px;top:135.6px;font-size:34px;color:#587590;letter-spacing:0.64px;-webkit-text-stroke:0.9px #587590;">Subnets</div>
<div class="t" style="left:232.5px;top:139.8px;font-size:31px;color:#c7cbd0;-webkit-text-stroke:0.35px #c7cbd0;">/</div>
<div class="t" style="left:270.4px;top:135.6px;font-size:34px;color:#587590;letter-spacing:5.04px;-webkit-text-stroke:0.9px #587590;">10.100.192.0</div>
<div class="t" style="left:540.0px;top:135.6px;font-size:34px;color:#587590;-webkit-text-stroke:0.9px #587590;">/</div>
<div class="t" style="left:566.9px;top:135.6px;font-size:34px;color:#587590;letter-spacing:6.68px;-webkit-text-stroke:0.9px #587590;">18</div>
<div style="position:absolute;left:2416px;top:105px;width:1040px;height:1811px;background:#fff;box-shadow:-1px 0 3px rgba(255,255,255,.55);"></div>
<div style="position:absolute;left:2416px;top:105px;width:1040px;height:94px;background:#edf1f5;border-bottom:1.5px solid #e2e6ea;"></div>
<svg style="left:2463px;top:261.5px" width="18" height="10" viewBox="0 0 18 10"><path d="M0 0 H18 L9 10 Z" fill="#7290ab"/></svg>
<div style="position:absolute;left:2460.5px;top:296.2px;width:951px;height:1.8px;background:#ebeff5;"></div>
<div style="position:absolute;left:2461px;top:304px;width:950.5px;height:162px;background:#fcfcfd;"></div>
<div style="position:absolute;left:2490.5px;top:376px;width:179px;height:60px;background:#fff;border:2px solid #c9d1dd;border-radius:5px;box-sizing:border-box;"></div>
<div style="position:absolute;left:2693px;top:376px;width:479.5px;height:60px;background:#fff;border:2.5px solid #3d6d97;border-radius:5px;box-sizing:border-box;"></div>
<div style="position:absolute;left:3205.3px;top:376px;width:109.4px;height:60px;background:#fff;border:2px solid #c9d1dd;border-radius:5px;box-sizing:border-box;"></div>
<svg style="left:3356px;top:333px" width="24" height="24" viewBox="0 0 24 24"><circle cx="12" cy="12" r="11.9" fill="#5a7894"/><path d="M12 6.6 V17.4 M6.6 12 H17.4" stroke="#fff" stroke-width="1.7"/></svg>
<svg style="left:3356px;top:394px" width="24" height="24" viewBox="0 0 24 24"><circle cx="12" cy="12" r="11.9" fill="#5a7894"/><path d="M8 8 L16 16 M16 8 L8 16" stroke="#fff" stroke-width="1.7"/></svg>
<svg style="left:2466.5px;top:519.5px" width="10" height="18" viewBox="0 0 10 18"><path d="M0 0 V18 L10 9 Z" fill="#7290ab"/></svg>
<div style="position:absolute;left:2460.5px;top:557.7px;width:951px;height:1.8px;background:#ebeff5;"></div>
<svg style="left:2463px;top:591.5px" width="18" height="10" viewBox="0 0 18 10"><path d="M0 0 H18 L9 10 Z" fill="#7290ab"/></svg>
<div style="position:absolute;left:2460.5px;top:625.7px;width:951px;height:1.8px;background:#ebeff5;"></div>
<div style="position:absolute;left:2461px;top:634px;width:950.5px;height:618px;background:#fcfcfd;"></div>
<div style="position:absolute;left:2490.5px;top:705px;width:891px;height:59.5px;background:#fff;border:2px solid #c9d1dd;border-radius:5px;box-sizing:border-box;"></div>
<div style="position:absolute;left:2490.5px;top:849px;width:656px;height:59.5px;background:#fff;border:2px solid #c9d1dd;border-radius:5px;box-sizing:border-box;"></div>
<div style="position:absolute;left:3195.5px;top:849px;width:186px;height:59.5px;background:#fff;border:2px solid #c9d1dd;border-radius:5px;box-sizing:border-box;"></div>
<div style="position:absolute;left:2490.5px;top:994px;width:891px;height:59.5px;background:#fff;border:2px solid #c9d1dd;border-radius:5px;box-sizing:border-box;"></div>
<div style="position:absolute;left:2490.5px;top:1139px;width:891px;height:59.5px;background:#fff;border:2px solid #c9d1dd;border-radius:5px;box-sizing:border-box;"></div>
<svg style="left:2463px;top:1311.0px" width="18" height="10" viewBox="0 0 18 10"><path d="M0 0 H18 L9 10 Z" fill="#7290ab"/></svg>
<div style="position:absolute;left:2460.5px;top:1345.2px;width:951px;height:1.8px;background:#ebeff5;"></div>
<div style="position:absolute;left:2461px;top:1353.5px;width:950.5px;height:182.5px;background:#fcfcfd;"></div>
<div style="position:absolute;left:2490.5px;top:1373px;width:891px;height:120.5px;background:#fff;border:2px solid #c9d1dd;border-radius:5px;box-sizing:border-box;"></div>
<svg style="left:3362px;top:1475px" width="16" height="16" viewBox="0 0 16 16" stroke="#444" stroke-width="1.3"><path d="M1 15 L15 1 M9 15 L15 9"/></svg>
<div style="position:absolute;left:3097px;top:1658.5px;width:135px;height:78.5px;background:#497ca6;border:2px solid #c5d4e3;border-radius:4px;box-sizing:border-box;box-shadow:0 1px 3px rgba(60,70,90,.25);"></div>
<div style="position:absolute;left:3273.5px;top:1658.5px;width:138px;height:78.5px;background:#fff;border:2px solid #cdd7e2;border-radius:4px;box-sizing:border-box;box-shadow:0 1px 3px rgba(60,70,90,.15);"></div>
<div class="t" style="left:2457.1px;top:138.8px;font-size:31px;color:#58758f;letter-spacing:1.29px;-webkit-text-stroke:1.1px #58758f;">10.100.192.3</div>
<div class="t" style="left:2495.3px;top:252.1px;font-size:28px;color:#6a8aa8;letter-spacing:0.37px;-webkit-text-stroke:0.8px #6a8aa8;">DNS</div>
<div class="t" style="left:2493.0px;top:332.9px;font-size:23.5px;color:#55728e;letter-spacing:1.76px;font-weight:bold;">Type</div>
<div class="t" style="left:2695.7px;top:332.9px;font-size:23.5px;color:#55728e;letter-spacing:1.05px;font-weight:bold;">Value</div>
<div class="t" style="left:3208.0px;top:332.9px;font-size:23.5px;color:#55728e;letter-spacing:0.42px;font-weight:bold;">TTL</div>
<div class="t" style="left:2506.6px;top:393.7px;font-size:26px;color:#0f2540;-webkit-text-stroke:0.35px #0f2540;">A</div>
<div class="t" style="left:3220.3px;top:392.5px;font-size:27px;color:#0f2540;letter-spacing:1.64px;-webkit-text-stroke:0.35px #0f2540;">600</div>
<div class="t" style="left:2495.3px;top:514.6px;font-size:28px;color:#6a8aa8;letter-spacing:0.87px;-webkit-text-stroke:0.8px #6a8aa8;">NAT</div>
<div class="t" style="left:2495.3px;top:582.1px;font-size:28px;color:#6a8aa8;letter-spacing:0.71px;-webkit-text-stroke:0.8px #6a8aa8;">Resource</div>
<div class="t" style="left:2489.5px;top:662.0px;font-size:26.3px;color:#54728e;letter-spacing:0.59px;-webkit-text-stroke:0.35px #54728e;">Hostname</div>
<div class="t" style="left:2490.1px;top:807.2px;font-size:26.3px;color:#54728e;letter-spacing:0.49px;-webkit-text-stroke:0.35px #54728e;">Operating System</div>
<div class="t" style="left:3194.8px;top:807.2px;font-size:26.3px;color:#54728e;letter-spacing:0.19px;-webkit-text-stroke:0.35px #54728e;">OS Version</div>
<div class="t" style="left:2489.5px;top:951.5px;font-size:26.3px;color:#54728e;letter-spacing:0.15px;-webkit-text-stroke:0.35px #54728e;">MAC Address</div>
<div class="t" style="left:2489.5px;top:1096.5px;font-size:26.3px;color:#54728e;letter-spacing:0.77px;-webkit-text-stroke:0.35px #54728e;">Interface</div>
<div class="t" style="left:2495.3px;top:1301.6px;font-size:28px;color:#6a8aa8;letter-spacing:1.35px;-webkit-text-stroke:1.4px #6a8aa8;">Notes</div>
<div class="t" style="left:3123.7px;top:1685.1px;font-size:27px;color:#fff;letter-spacing:0.06px;-webkit-text-stroke:0.5px #fff;">Create</div>
<div class="t" style="left:3300.2px;top:1685.1px;font-size:27px;color:#0e2238;letter-spacing:0.10px;-webkit-text-stroke:0.3px #0e2238;">Cancel</div>
<div style="position:absolute;left:0px;top:0px;width:3456px;height:104px;background:#fff;"></div>
<div style="position:absolute;left:0px;top:104px;width:3456px;height:2px;background:#d3d8de;"></div>
<svg style="left:54px;top:23px" width="46" height="46" viewBox="0 0 46 46">
<circle cx="22.5" cy="23.2" r="22.2" fill="#102a3a"/>
<g fill="#9b27af">
<path d="M0 8.8 H21 C28 8.8 27 1 34 1 H46 V8.4 H31 C24 8.4 24 15.4 16 15.4 H0 Z"/>
<path d="M0 18.8 H21 C28 18.8 27 11 34 11 H46 V18.4 H31 C24 18.4 24 25.4 16 25.4 H0 Z"/>
<path d="M0 28.8 H21 C28 28.8 27 21 34 21 H46 V28.4 H31 C24 28.4 24 35.4 16 35.4 H0 Z"/>
<path d="M0 38.8 H21 C28 38.8 27 31 34 31 H46 V38.4 H31 C24 38.4 24 45.4 16 45.4 H0 Z"/>
</g></svg>
<svg style="left:1203.3px;top:51.6px" width="15.2" height="8.4" viewBox="0 0 15.2 8.4"><path d="M0.6 0.6 L7.6 7.6000000000000005 L14.6 0.6" fill="none" stroke="#4f7496" stroke-width="1.6"/></svg>
<svg style="left:1653.8px;top:51.4px" width="12.6" height="8.6" viewBox="0 0 12.6 8.6"><path d="M0.6 0.6 L6.3 7.8 L12.0 0.6" fill="none" stroke="#4f7496" stroke-width="1.6"/></svg>
<svg style="left:1840.6px;top:51.4px" width="12.6" height="8.6" viewBox="0 0 12.6 8.6"><path d="M0.6 0.6 L6.3 7.8 L12.0 0.6" fill="none" stroke="#4f7496" stroke-width="1.6"/></svg>
<svg style="left:2036.6px;top:51.4px" width="12.6" height="8.6" viewBox="0 0 12.6 8.6"><path d="M0.6 0.6 L6.3 7.8 L12.0 0.6" fill="none" stroke="#4f7496" stroke-width="1.6"/></svg>
<svg style="left:3217.8px;top:51.6px" width="12.4" height="8.3" viewBox="0 0 12.4 8.3"><path d="M0.6 0.6 L6.2 7.500000000000001 L11.8 0.6" fill="none" stroke="#4f7496" stroke-width="1.6"/></svg>
<svg style="left:2113px;top:41px" width="21" height="20" viewBox="0 0 21 20" fill="none" stroke="#4f7496" stroke-width="1.7">
<path d="M1.2 0 V18.6 H21"/><path d="M5.4 11 V15.5 M9.7 6 V15.5 M14 8.5 V15.5 M18.3 4 V15.5" stroke-width="1.9"/></svg>
<svg style="left:2317px;top:42px" width="22" height="22" viewBox="0 0 22 22" fill="none" stroke="#4f7496" stroke-width="1.9" stroke-linejoin="round">
<path d="M14.2 1.3 A6 6 0 0 0 8.9 9.3 L1.2 17 A1 1 0 0 0 1.2 18.6 L3.4 20.8 A1 1 0 0 0 5 20.8 L12.7 13.1 A6 6 0 0 0 20.7 7.8 L17.2 11.0 L13.4 10.3 L11.7 8.6 L11 4.8 Z"/></svg>
<svg style="left:2520px;top:41px" width="24" height="20" viewBox="0 0 24 20" fill="none" stroke="#4f7496" stroke-width="1.7">
<path d="M12 2.5 C9 0.8 5 0.8 1 1.2 V16 C5 15.6 9 15.6 12 17.8 C15 15.6 19 15.6 23 16 V1.2 C19 0.8 15 0.8 12 2.5 Z M12 2.5 V17.8"/>
<path d="M4 6.3 H9 M4 9.8 H9 M15 6.3 H20 M15 9.8 H20" stroke-width="1.3"/></svg>
<svg style="left:2729px;top:43.5px" width="26" height="17" viewBox="0 0 26 17" fill="none" stroke="#4f7496" stroke-width="1.8" stroke-linejoin="round">
<path d="M6 16 A5 5 0 0 1 5.2 6.2 A7.2 7.2 0 0 1 19 6.6 A4.8 4.8 0 0 1 20.3 16 Z"/></svg>
<svg style="left:3330px;top:37.5px" width="22" height="28" viewBox="0 0 22 28" fill="none" stroke="#4f7496" stroke-width="1.8">
<path d="M3 23.3 V13 A8 8 0 0 1 19 13 V23.3 M0 23.3 H22 M8 24 A3 3 0 0 0 14 24 M11 0.5 V4.5"/></svg>
<div class="t" style="left:116.5px;top:21.7px;font-size:22.5px;color:#3a9fbc;letter-spacing:1.43px;-webkit-text-stroke:0.4px #3a9fbc;">tidal</div>
<div class="t" style="left:115.1px;top:42.0px;font-size:30.5px;color:#0e2f3b;letter-spacing:1.17px;-webkit-text-stroke:0.3px #0e2f3b;">lightmesh</div>
<div class="t" style="left:1063.8px;top:38.0px;font-size:28.3px;color:#4f7496;letter-spacing:0.71px;-webkit-text-stroke:0.35px #4f7496;">Network</div>
<div class="t" style="left:1272.8px;top:38.0px;font-size:28.3px;color:#4f7496;letter-spacing:0.23px;-webkit-text-stroke:0.35px #4f7496;">Resources</div>
<div class="t" style="left:1469.2px;top:38.0px;font-size:28.3px;color:#4f7496;letter-spacing:0.54px;-webkit-text-stroke:0.35px #4f7496;">Organization</div>
<div class="t" style="left:1740.5px;top:38.0px;font-size:28.3px;color:#4f7496;letter-spacing:0.34px;-webkit-text-stroke:0.35px #4f7496;">Admin</div>
<div class="t" style="left:1909.6px;top:38.0px;font-size:28.3px;color:#4f7496;letter-spacing:0.64px;-webkit-text-stroke:0.35px #4f7496;">Settings</div>
<div class="t" style="left:2157.8px;top:36.0px;font-size:28.3px;color:#4f7496;letter-spacing:0.33px;-webkit-text-stroke:0.35px #4f7496;">Reports</div>
<div class="t" style="left:2353.6px;top:38.0px;font-size:28.3px;color:#4f7496;letter-spacing:0.69px;-webkit-text-stroke:0.35px #4f7496;">Support</div>
<div class="t" style="left:2565.2px;top:36.0px;font-size:28.3px;color:#4f7496;letter-spacing:0.11px;-webkit-text-stroke:0.35px #4f7496;">Guides</div>
<div class="t" style="left:2770.7px;top:38.0px;font-size:28.3px;color:#4f7496;letter-spacing:0.74px;-webkit-text-stroke:0.35px #4f7496;">Cloud</div>
<div class="t" style="left:2887.1px;top:38.0px;font-size:28.3px;color:#4f7496;letter-spacing:0.45px;-webkit-text-stroke:0.35px #4f7496;">andrew@tidalcloud.com</div>
<div style="position:absolute;left:80px;top:1724px;width:112px;height:112px;border-radius:50%;background:#fff;box-shadow:0 6px 14px rgba(0,0,0,.35);"></div>
<svg style="left:80px;top:1724px" width="112" height="112" viewBox="0 0 112 112" fill="none">
<circle cx="50" cy="44.5" r="21.8" stroke="#c00000" stroke-width="9"/>
<path d="M71.3 19.5 V67 C71.3 87 57 94.5 39 87.5" stroke="#c00000" stroke-width="9"/>
<circle cx="87.6" cy="68" r="7.2" fill="#c00000"/></svg>
<div style="position:absolute;left:156.5px;top:1720.3px;width:39px;height:39px;border-radius:50%;background:#bf0000;"></div>
<div class="t" style="left:168.0px;top:1730.4px;font-size:21.5px;color:#fff;font-weight:bold;">3</div>
<svg style="left:2796.6px;top:492.7px;filter:drop-shadow(0.5px 1.5px 1.6px rgba(0,0,0,.4))" width="28" height="40" viewBox="0 0 28 40">
<path d="M5.5 5 L5.5 27 L10.2 22.6 L14.5 32.2 L18 30.7 L13.9 21 L20.4 20.5 Z" fill="#000" stroke="#fff" stroke-width="2.6" stroke-linejoin="round" paint-order="stroke"/></svg>
</body></html>
